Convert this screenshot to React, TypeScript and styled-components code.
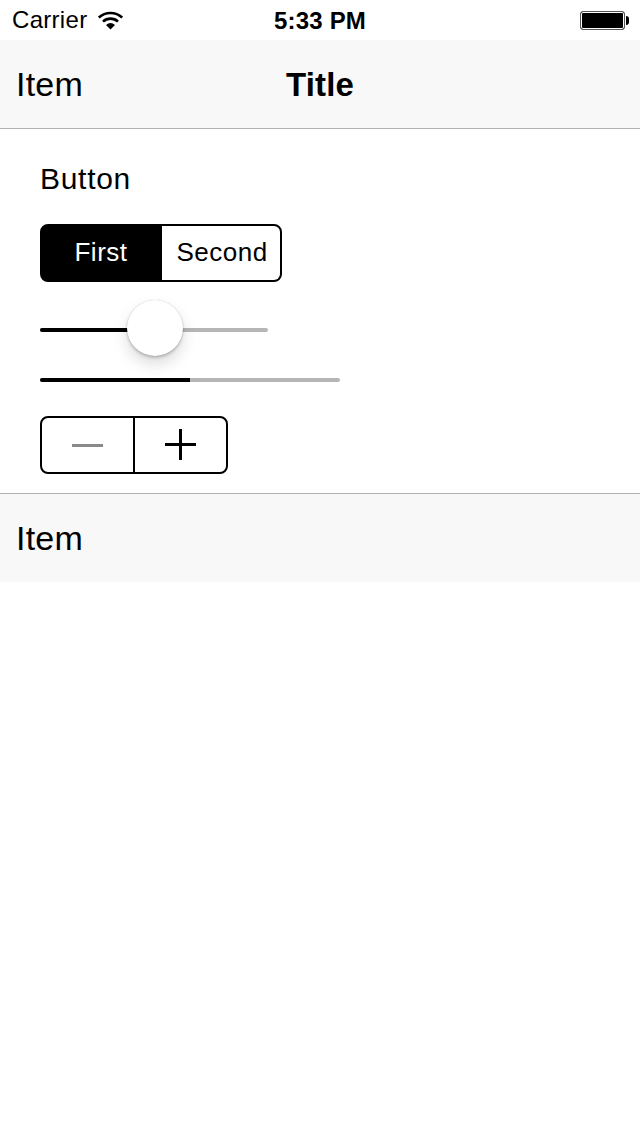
import React from "react";
import styled, { createGlobalStyle } from "styled-components";

const Global = createGlobalStyle`
  html, body { margin: 0; padding: 0; background: #fff; }
  body { font-family: "Liberation Sans", Arial, sans-serif; color: #000; }
`;

const Page = styled.div`
  width: 640px;
  height: 1136px;
  background: #fff;
  overflow: hidden;
  display: flex;
  flex-direction: column;
`;

const StatusBar = styled.div`
  position: relative;
  height: 40px;
  flex: none;
  display: flex;
  align-items: center;
  justify-content: space-between;
  padding: 0 12px;
  box-sizing: border-box;
`;

const StatusLeft = styled.div`
  display: flex;
  align-items: center;
  gap: 11px;
  font-size: 24px;
  letter-spacing: 0.3px;
`;

const Clock = styled.div`
  position: absolute;
  left: 0;
  right: 0;
  top: 0;
  line-height: 41px;
  text-align: center;
  font-size: 24px;
  font-weight: 700;
  letter-spacing: 0.2px;
`;

const Battery = styled.div`
  position: relative;
  width: 45px;
  height: 19px;
  margin-right: 3px;
  box-sizing: border-box;
  border: 1px solid #555;
  border-radius: 3px;
  background: #000;
  box-shadow: inset 0 0 0 1px #fff;
  &::after {
    content: "";
    position: absolute;
    right: -5px;
    top: 4px;
    width: 3px;
    height: 9px;
    background: #000;
    border-radius: 0 3px 3px 0;
  }
`;

const Bar = styled.div<{ $top?: boolean }>`
  flex: none;
  height: 89px;
  background: #f8f8f8;
  box-sizing: border-box;
  ${(p) => (p.$top ? "border-bottom: 1px solid #b2b2b2;" : "border-top: 1px solid #b2b2b2;")}
  position: relative;
  display: flex;
  align-items: center;
  padding: 0 16px;
`;

const BarItem = styled.div`
  font-size: 34px;
  letter-spacing: 0.2px;
`;

const BarTitle = styled.div`
  position: absolute;
  left: 0;
  right: 0;
  text-align: center;
  font-size: 33px;
  font-weight: 700;
  letter-spacing: 0.2px;
  padding-top: 1px;
`;

const Content = styled.div`
  flex: none;
  height: 364px;
  box-sizing: border-box;
  padding: 29px 40px 0;
  display: flex;
  flex-direction: column;
  align-items: flex-start;
`;

const TextButton = styled.div`
  font-size: 30px;
  letter-spacing: 0.7px;
  line-height: 42px;
  height: 42px;
`;

const Segmented = styled.div`
  margin-top: 24px;
  display: flex;
  width: 242px;
  height: 58px;
  box-sizing: border-box;
  border: 2px solid #000;
  border-radius: 8px;
  overflow: hidden;
  background: #000;
`;

const Segment = styled.div<{ $selected?: boolean }>`
  width: 120px;
  flex: none;
  display: flex;
  align-items: center;
  justify-content: center;
  font-size: 26px;
  letter-spacing: 0.5px;
  padding-bottom: 1px;
  padding-right: ${(p) => (p.$selected ? 2 : 0)}px;
  box-sizing: border-box;
  background: ${(p) => (p.$selected ? "#000" : "#fff")};
  color: ${(p) => (p.$selected ? "#fff" : "#000")};
`;

const Slider = styled.div`
  position: relative;
  margin-top: 46px;
  width: 228px;
  height: 4px;
  border-radius: 2px;
  background: #b6b6b6;
`;

const SliderFill = styled.div`
  height: 4px;
  border-radius: 2px 0 0 2px;
  background: #000;
`;

const Thumb = styled.div`
  position: absolute;
  top: -28px;
  width: 56px;
  height: 56px;
  margin-left: -28px;
  border-radius: 50%;
  background: #fff;
  box-shadow: 0 8px 16px rgba(0, 0, 0, 0.14), 0 2px 3px rgba(0, 0, 0, 0.2), 0 0 1px rgba(0, 0, 0, 0.25);
`;

const Progress = styled.div`
  margin-top: 46px;
  width: 300px;
  height: 4px;
  border-radius: 2px;
  overflow: hidden;
  background: #b6b6b6;
`;

const ProgressFill = styled.div`
  height: 100%;
  background: #000;
`;

const Stepper = styled.div`
  margin-top: 34px;
  display: flex;
  width: 188px;
  height: 58px;
  box-sizing: border-box;
  border: 2px solid #000;
  border-radius: 8px;
`;

const StepCell = styled.div<{ $divider?: boolean }>`
  ${(p) => (p.$divider ? "width: 93px; flex: none; border-right: 2px solid #000;" : "flex: 1;")}
  box-sizing: border-box;
  display: flex;
  align-items: flex-start;
  justify-content: center;
  padding-top: 11px;
`;

const Wifi = () => (
  <svg width="25" height="19" viewBox="0 0 25 19" aria-hidden="true">
    <path d="M0.8 6.6 A17 17 0 0 1 24.2 6.6" fill="none" stroke="#000" strokeWidth="2.6" />
    <path d="M5 10.6 A11 11 0 0 1 20 10.6" fill="none" stroke="#000" strokeWidth="2.6" />
    <path d="M8 14 Q12.5 9.8 17 14 L12.5 18.5 Z" fill="#000" />
  </svg>
);

const Minus = () => (
  <svg width="31" height="32" viewBox="0 0 31 32" aria-hidden="true">
    <rect x="0" y="15" width="31" height="3" fill="#8a8a8a" />
  </svg>
);

const Plus = () => (
  <svg width="31" height="32" viewBox="0 0 31 32" aria-hidden="true">
    <rect x="0" y="14" width="31" height="3" fill="#000" />
    <rect x="14" y="0" width="3" height="31" fill="#000" />
  </svg>
);

const sliderValue = 115 / 228;

export default function App() {
  return (
    <Page>
      <Global />
      <StatusBar>
        <StatusLeft>
          <span>Carrier</span>
          <Wifi />
        </StatusLeft>
        <Clock>5:33 PM</Clock>
        <Battery />
      </StatusBar>
      <Bar $top>
        <BarItem>Item</BarItem>
        <BarTitle>Title</BarTitle>
      </Bar>
      <Content>
        <TextButton>Button</TextButton>
        <Segmented>
          <Segment $selected>First</Segment>
          <Segment>Second</Segment>
        </Segmented>
        <Slider>
          <SliderFill style={{ width: `${sliderValue * 100}%` }} />
          <Thumb style={{ left: `${sliderValue * 100}%` }} />
        </Slider>
        <Progress>
          <ProgressFill style={{ width: "50%" }} />
        </Progress>
        <Stepper>
          <StepCell $divider>
            <Minus />
          </StepCell>
          <StepCell>
            <Plus />
          </StepCell>
        </Stepper>
      </Content>
      <Bar>
        <BarItem>Item</BarItem>
      </Bar>
    </Page>
  );
}
